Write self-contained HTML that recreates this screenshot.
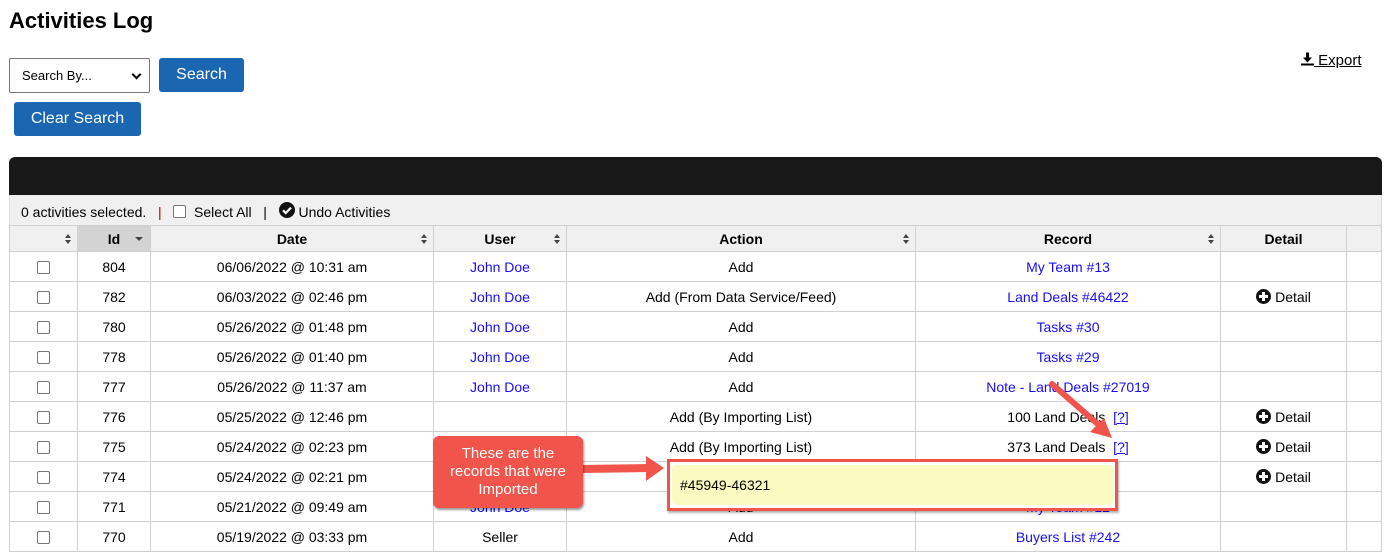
<!DOCTYPE html>
<html><head><style>
*{box-sizing:border-box}
body{margin:0;width:1389px;height:555px;overflow:hidden;background:#fff;font-family:"Liberation Sans",Arial,sans-serif;font-size:14px;color:#000;position:relative}
h1{position:absolute;left:9px;top:8px;margin:0;font-size:22px;font-weight:bold}
.sel{position:absolute;left:9px;top:58px;width:141px;height:35px;border:1px solid #767676;border-radius:2px;font-size:13px;padding:9px 12px}
.sel:after{content:"";position:absolute;right:9px;top:12px;width:5px;height:5px;border-right:2px solid #000;border-bottom:2px solid #000;transform:rotate(45deg)}
.btn{position:absolute;background:#1a66b0;color:#fff;border-radius:3px;font-size:16px;text-align:center}
.exp{position:absolute;left:1301px;top:52px;font-size:15px;text-decoration:underline}
.bar{position:absolute;left:9px;top:157px;width:1373px;height:38px;background:#181818;border-radius:6px 6px 0 0}
.tool{position:absolute;left:9px;top:195px;width:1373px;height:30px;background:#f0f0f0;border-left:1px solid #ddd;border-right:1px solid #ddd;font-size:14px;padding:7px 11px}
table{position:absolute;left:9px;top:225px;border-collapse:collapse;font-size:14px}
td,th{border:1px solid #d0d0d0;height:30px;text-align:center;padding:0;position:relative}
th{background:#f0f0f0;height:26px;font-weight:bold;line-height:24px}
th.s:after{content:"";position:absolute;right:6px;top:8px;border:3.5px solid transparent;border-bottom:4px solid #444;border-top:0}
th.s:before{content:"";position:absolute;right:6px;top:14px;border:3.5px solid transparent;border-top:4px solid #444;border-bottom:0}
td{line-height:28px}
a{color:#1a0dff;text-decoration:none}
.cb{display:inline-block;width:13px;height:13px;border:1px solid #767676;border-radius:2px;vertical-align:middle}
.plus{display:inline-block;width:15px;height:15px;border-radius:50%;background:#111;position:relative;vertical-align:-2px;margin-right:4px}
.plus:before{content:"";position:absolute;left:3px;top:6px;width:9px;height:3px;background:#fff}
.plus:after{content:"";position:absolute;left:6px;top:3px;width:3px;height:9px;background:#fff}
</style></head><body>
<h1>Activities Log</h1>
<div class="sel">Search By...</div>
<div class="btn" style="left:159px;top:58px;width:85px;height:34px;line-height:33px">Search</div>
<div class="btn" style="left:14px;top:102px;width:127px;height:34px;line-height:33px">Clear Search</div>
<div class="exp"><svg width="13" height="14" viewBox="0 0 13 13" style="vertical-align:-1px"><path d="M5 0h3v5h3l-4.5 5L2 5h3z" fill="#000"/><rect x="0" y="11" width="13" height="2" fill="#000"/></svg> Export</div>
<div class="bar"></div>
<div class="tool">0 activities selected. &nbsp;&nbsp;<span style="color:#a00">|</span>&nbsp;&nbsp; <span class="cb" style="background:#fff;vertical-align:-1px"></span>&nbsp; Select All &nbsp;&nbsp;|&nbsp;&nbsp; <svg width="16" height="16" viewBox="0 0 16 16" style="vertical-align:-1px"><circle cx="8" cy="8" r="8" fill="#111"/><path d="M4 8.3l2.7 2.7L12 5.6" stroke="#fff" stroke-width="2.2" fill="none"/></svg> Undo Activities</div>
<table>
<tr><th class="s" style="width:68px"></th><th style="width:73px;background:#d3d3d3">Id<span style="position:absolute;right:7px;top:11px;border:4px solid transparent;border-top:4px solid #444;border-bottom:0"></span></th><th class="s" style="width:283px">Date</th><th class="s" style="width:133px">User</th><th class="s" style="width:349px">Action</th><th class="s" style="width:305px">Record</th><th style="width:126px">Detail</th><th style="width:35px"></th></tr>
<tr><td><span class="cb"></span></td><td>804</td><td>06/06/2022 @ 10:31 am</td><td><a>John Doe</a></td><td>Add</td><td><a>My Team #13</a></td><td></td><td></td></tr>
<tr><td><span class="cb"></span></td><td>782</td><td>06/03/2022 @ 02:46 pm</td><td><a>John Doe</a></td><td>Add (From Data Service/Feed)</td><td><a>Land Deals #46422</a></td><td><span class="plus"></span>Detail</td><td></td></tr>
<tr><td><span class="cb"></span></td><td>780</td><td>05/26/2022 @ 01:48 pm</td><td><a>John Doe</a></td><td>Add</td><td><a>Tasks #30</a></td><td></td><td></td></tr>
<tr><td><span class="cb"></span></td><td>778</td><td>05/26/2022 @ 01:40 pm</td><td><a>John Doe</a></td><td>Add</td><td><a>Tasks #29</a></td><td></td><td></td></tr>
<tr><td><span class="cb"></span></td><td>777</td><td>05/26/2022 @ 11:37 am</td><td><a>John Doe</a></td><td>Add</td><td><a>Note - Land Deals #27019</a></td><td></td><td></td></tr>
<tr><td><span class="cb"></span></td><td>776</td><td>05/25/2022 @ 12:46 pm</td><td></td><td>Add (By Importing List)</td><td>100 Land Deals &nbsp;<a style="text-decoration:underline">[?]</a></td><td><span class="plus"></span>Detail</td><td></td></tr>
<tr><td><span class="cb"></span></td><td>775</td><td>05/24/2022 @ 02:23 pm</td><td></td><td>Add (By Importing List)</td><td>373 Land Deals &nbsp;<a style="text-decoration:underline">[?]</a></td><td><span class="plus"></span>Detail</td><td></td></tr>
<tr><td><span class="cb"></span></td><td>774</td><td>05/24/2022 @ 02:21 pm</td><td></td><td></td><td></td><td><span class="plus"></span>Detail</td><td></td></tr>
<tr><td><span class="cb"></span></td><td>771</td><td>05/21/2022 @ 09:49 am</td><td><a>John Doe</a></td><td>Add</td><td><a>My Team #12</a></td><td></td><td></td></tr>
<tr><td><span class="cb"></span></td><td>770</td><td>05/19/2022 @ 03:33 pm</td><td>Seller</td><td>Add</td><td><a>Buyers List #242</a></td><td></td><td></td></tr>
</table>
<svg width="1389" height="555" style="position:absolute;left:0;top:0">
<path d="M1052 384 L1100 426" stroke="#f0544a" stroke-width="6" stroke-linecap="round"/>
<path d="M1112 438 L1090 432 L1104 418 Z" fill="#f0544a"/>
<path d="M580 469 L650 468" stroke="#f0544a" stroke-width="8"/>
<path d="M664 468 L646 456 L646 481 Z" fill="#f0544a"/>
</svg>
<div style="position:absolute;left:433px;top:436px;width:150px;height:72px;background:#f0544a;border-radius:6px;box-shadow:1px 2px 2px rgba(0,0,0,.4);color:#fff;font-size:15px;text-align:center;line-height:18px;padding-top:9px">These are the<br>records that were<br>Imported</div>
<div style="position:absolute;left:667px;top:459px;width:451px;height:52px;border:3px solid #f0544a;background:#fff;box-shadow:1px 2px 2px rgba(0,0,0,.3)">
<div style="position:absolute;left:2px;top:3px;right:2px;bottom:3px;background:#fafac0;border-radius:4px;padding:12px 8px;font-size:14px">#45949-46321</div></div>
</body></html>
